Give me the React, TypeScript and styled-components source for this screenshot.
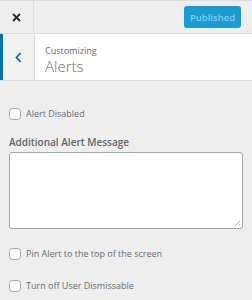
import React from 'react';
import styled, { createGlobalStyle } from 'styled-components';

const GlobalStyle = createGlobalStyle`
  html, body {
    margin: 0;
    padding: 0;
    background: #eeeeee;
    font-family: "Open Sans", "Noto Sans", sans-serif;
    color: #555d66;
  }
`;

const Panel = styled.div`
  width: 252px;
  height: 300px;
  background: #eeeeee;
  border-top: 1px solid #dddddd;
  box-sizing: border-box;
  overflow: hidden;
`;

const TopBar = styled.div`
  display: flex;
  align-items: center;
  height: 33px;
  border-bottom: 1px solid #dddddd;
  box-sizing: border-box;
`;

const CloseButton = styled.div`
  width: 34px;
  height: 100%;
  display: flex;
  align-items: center;
  justify-content: center;
  border-right: 1px solid #dddddd;
  box-sizing: border-box;
`;

const Spacer = styled.div`
  flex: 1;
`;

const PublishButton = styled.div`
  width: 57px;
  height: 22px;
  margin-right: 11px;
  border-radius: 3px;
  background: #1a9bd2;
  color: #7fcbea;
  font-size: 9.5px;
  font-weight: 600;
  display: flex;
  align-items: center;
  justify-content: center;
`;

const SectionHead = styled.div`
  display: flex;
  height: 47px;
  background: #ffffff;
  border-bottom: 1px solid #dddddd;
  box-sizing: border-box;
`;

const BackButton = styled.div`
  width: 35px;
  border-left: 3px solid #0073aa;
  border-right: 1px solid #dddddd;
  background: #f1f1f1;
  box-sizing: border-box;
  display: flex;
  align-items: center;
  justify-content: center;
`;

const Titles = styled.div`
  padding: 11px 0 0 10px;
  display: flex;
  flex-direction: column;
`;

const Crumb = styled.span`
  font-size: 9px;
  line-height: 12px;
  color: #666c72;
`;

const Title = styled.span`
  font-size: 15px;
  line-height: 19px;
  font-weight: 300;
  color: #666c72;
`;

const Body = styled.div`
  padding: 26px 9px 0 9px;
  display: flex;
  flex-direction: column;
`;

const CheckRow = styled.label<{ $gap: number }>`
  display: flex;
  align-items: center;
  gap: 5px;
  margin-bottom: ${(p) => p.$gap}px;
  font-size: 9px;
  color: #666c72;
`;

const Box = styled.span`
  width: 12px;
  height: 12px;
  border: 1px solid #a0a5aa;
  border-radius: 3.5px;
  background: #ffffff;
  box-sizing: border-box;
  flex-shrink: 0;
`;

const FieldLabel = styled.div`
  font-size: 10px;
  font-weight: 600;
  color: #5f656b;
  margin-bottom: 3px;
`;

const TextArea = styled.div`
  position: relative;
  height: 77px;
  background: #ffffff;
  border: 1px solid #a0a5aa;
  border-radius: 3px;
  box-sizing: border-box;
  margin-bottom: 18px;
`;

const Grip = styled.svg`
  position: absolute;
  right: 1px;
  bottom: 1px;
`;

export default function App() {
  return (
    <>
      <GlobalStyle />
      <Panel>
        <TopBar>
          <CloseButton>
            <svg width="9" height="9" viewBox="0 0 9 9">
              <path d="M1 1L8 8M8 1L1 8" stroke="#23282d" strokeWidth="1.8" />
            </svg>
          </CloseButton>
          <Spacer />
          <PublishButton>Published</PublishButton>
        </TopBar>
        <SectionHead>
          <BackButton>
            <svg width="7" height="11" viewBox="0 0 7 11">
              <path d="M5.5 1L1.5 5.5L5.5 10" stroke="#0073aa" strokeWidth="1.8" fill="none" />
            </svg>
          </BackButton>
          <Titles>
            <Crumb>Customizing</Crumb>
            <Title>Alerts</Title>
          </Titles>
        </SectionHead>
        <Body>
          <CheckRow $gap={15}>
            <Box />
            Alert Disabled
          </CheckRow>
          <FieldLabel>Additional Alert Message</FieldLabel>
          <TextArea>
            <Grip width="7" height="7" viewBox="0 0 7 7">
              <path d="M6 1L1 6M6 4L4 6" stroke="#a0a5aa" strokeWidth="0.8" />
            </Grip>
          </TextArea>
          <CheckRow $gap={19}>
            <Box />
            Pin Alert to the top of the screen
          </CheckRow>
          <CheckRow $gap={0}>
            <Box />
            Turn off User Dismissable
          </CheckRow>
        </Body>
      </Panel>
    </>
  );
}
